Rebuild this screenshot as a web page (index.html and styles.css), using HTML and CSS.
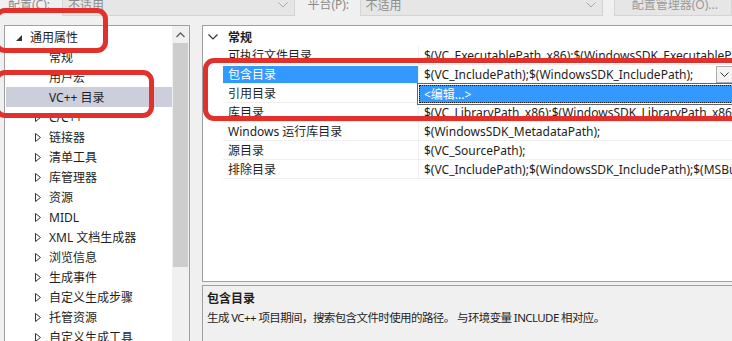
FILE: index.html
```html
<!DOCTYPE html>
<html>
<head>
<meta charset="UTF-8">
<title>属性页</title>
<link rel="stylesheet" href="styles.css">
</head>
<body>
<div class="topbar">
  <span class="lbl lbl-conf">配置(C):</span>
  <div class="combo combo-conf"><span>不适用</span>
    <svg class="chev" width="10" height="6" viewBox="0 0 10 6"><polyline points="0.5,0.5 5,5 9.5,0.5" fill="none" stroke="#a8a8a8" stroke-width="1"/></svg>
  </div>
  <span class="lbl lbl-plat">平台(P):</span>
  <div class="combo combo-plat"><span>不适用</span>
    <svg class="chev" width="10" height="6" viewBox="0 0 10 6"><polyline points="0.5,0.5 5,5 9.5,0.5" fill="none" stroke="#a8a8a8" stroke-width="1"/></svg>
  </div>
  <div class="btn">配置管理器(O)...</div>
</div>

<div class="main">
  <div class="tree">
    <ul class="tree-list">
      <li class="node open"><svg class="tri" width="6" height="6" viewBox="0 0 6 6"><polygon points="6,0 6,6 0,6" fill="#333"/></svg>通用属性</li>
      <li class="leaf">常规</li>
      <li class="leaf">用户宏</li>
      <li class="leaf sel">VC++ 目录</li>
      <li class="node"><svg class="tri-c" width="6" height="9" viewBox="0 0 6 9"><polygon points="0.5,0.5 5.5,4.5 0.5,8.5" fill="none" stroke="#333" stroke-width="1"/></svg>C/C++</li>
      <li class="node"><svg class="tri-c" width="6" height="9" viewBox="0 0 6 9"><polygon points="0.5,0.5 5.5,4.5 0.5,8.5" fill="none" stroke="#333" stroke-width="1"/></svg>链接器</li>
      <li class="node"><svg class="tri-c" width="6" height="9" viewBox="0 0 6 9"><polygon points="0.5,0.5 5.5,4.5 0.5,8.5" fill="none" stroke="#333" stroke-width="1"/></svg>清单工具</li>
      <li class="node"><svg class="tri-c" width="6" height="9" viewBox="0 0 6 9"><polygon points="0.5,0.5 5.5,4.5 0.5,8.5" fill="none" stroke="#333" stroke-width="1"/></svg>库管理器</li>
      <li class="node"><svg class="tri-c" width="6" height="9" viewBox="0 0 6 9"><polygon points="0.5,0.5 5.5,4.5 0.5,8.5" fill="none" stroke="#333" stroke-width="1"/></svg>资源</li>
      <li class="node"><svg class="tri-c" width="6" height="9" viewBox="0 0 6 9"><polygon points="0.5,0.5 5.5,4.5 0.5,8.5" fill="none" stroke="#333" stroke-width="1"/></svg>MIDL</li>
      <li class="node"><svg class="tri-c" width="6" height="9" viewBox="0 0 6 9"><polygon points="0.5,0.5 5.5,4.5 0.5,8.5" fill="none" stroke="#333" stroke-width="1"/></svg>XML 文档生成器</li>
      <li class="node"><svg class="tri-c" width="6" height="9" viewBox="0 0 6 9"><polygon points="0.5,0.5 5.5,4.5 0.5,8.5" fill="none" stroke="#333" stroke-width="1"/></svg>浏览信息</li>
      <li class="node"><svg class="tri-c" width="6" height="9" viewBox="0 0 6 9"><polygon points="0.5,0.5 5.5,4.5 0.5,8.5" fill="none" stroke="#333" stroke-width="1"/></svg>生成事件</li>
      <li class="node"><svg class="tri-c" width="6" height="9" viewBox="0 0 6 9"><polygon points="0.5,0.5 5.5,4.5 0.5,8.5" fill="none" stroke="#333" stroke-width="1"/></svg>自定义生成步骤</li>
      <li class="node"><svg class="tri-c" width="6" height="9" viewBox="0 0 6 9"><polygon points="0.5,0.5 5.5,4.5 0.5,8.5" fill="none" stroke="#333" stroke-width="1"/></svg>托管资源</li>
      <li class="node"><svg class="tri-c" width="6" height="9" viewBox="0 0 6 9"><polygon points="0.5,0.5 5.5,4.5 0.5,8.5" fill="none" stroke="#333" stroke-width="1"/></svg>自定义生成工具</li>
    </ul>
    <div class="vscroll">
      <svg class="sarrow" width="9" height="6" viewBox="0 0 9 6"><polyline points="0.5,5 4.5,1 8.5,5" fill="none" stroke="#606060" stroke-width="1.3"/></svg>
      <div class="thumb"></div>
      <div class="track"></div>
      <svg class="sarrow" width="9" height="6" viewBox="0 0 9 6"><polyline points="0.5,1 4.5,5 8.5,1" fill="none" stroke="#606060" stroke-width="1.3"/></svg>
    </div>
  </div>

  <div class="right">
    <div class="grid">
      <div class="cat">
        <span class="gut"><svg width="10" height="6" viewBox="0 0 10 6"><polyline points="0.5,0.5 5,5 9.5,0.5" fill="none" stroke="#333" stroke-width="1.2"/></svg></span>
        <span class="cat-name">常规</span>
      </div>
      <div class="row"><span class="gut"></span><span class="name">可执行文件目录</span><span class="val">$(VC_ExecutablePath_x86);$(WindowsSDK_ExecutablePath);$(VS_ExecutablePath);$(MSBuild_ExecutablePath)</span></div>
      <div class="row row-sel"><span class="gut"></span><span class="name">包含目录</span><span class="val">$(VC_IncludePath);$(WindowsSDK_IncludePath);
        <span class="dd-btn"><svg width="9" height="5" viewBox="0 0 9 5"><polyline points="0.5,0.5 4.5,4.5 8.5,0.5" fill="none" stroke="#333" stroke-width="1"/></svg></span>
        <span class="dd-list"><span class="dd-item">&lt;编辑...&gt;</span></span>
      </span></div>
      <div class="row"><span class="gut"></span><span class="name">引用目录</span><span class="val">$(VC_ReferencesPath_x86);</span></div>
      <div class="row"><span class="gut"></span><span class="name">库目录</span><span class="val">$(VC_LibraryPath_x86);$(WindowsSDK_LibraryPath_x86);$(NETFXKitsDir)Lib\um\x86</span></div>
      <div class="row"><span class="gut"></span><span class="name">Windows 运行库目录</span><span class="val">$(WindowsSDK_MetadataPath);</span></div>
      <div class="row"><span class="gut"></span><span class="name">源目录</span><span class="val">$(VC_SourcePath);</span></div>
      <div class="row"><span class="gut"></span><span class="name">排除目录</span><span class="val">$(VC_IncludePath);$(WindowsSDK_IncludePath);$(MSBuild_ExecutablePath);$(VC_LibraryPath_x86);</span></div>
    </div>
    <div class="desc">
      <div class="desc-title">包含目录</div>
      <div class="desc-text">生成 VC++ 项目期间，搜索包含文件时使用的路径。 与环境变量 INCLUDE 相对应。</div>
    </div>
  </div>
</div>

<!-- 红色标注框 -->
<div class="mark mark1"></div>
<div class="mark mark2"></div>
<div class="mark mark3"></div>
</body>
</html>
```

FILE: styles.css
```css
body {
  margin: 0;
  width: 732px;
  height: 341px;
  overflow: hidden;
  position: relative;
  background: #f0f0f0;
  font-family: "Noto Sans", "Noto Sans CJK SC", sans-serif;
  font-size: 12px;
  color: #1e1e1e;
}

/* 顶部配置栏 */
.topbar {
  display: flex;
  align-items: center;
  height: 22px;
  margin-top: -6px;
  margin-bottom: 9px;
  color: #8a8a8a;
}
.lbl {
  line-height: 22px;
  white-space: nowrap;
}
.lbl-conf {
  margin-left: 8px;
  width: 55px;
}
.lbl-plat {
  margin-left: 12px;
  width: 53px;
}
.combo {
  display: flex;
  align-items: center;
  justify-content: space-between;
  box-sizing: border-box;
  height: 22px;
  padding: 0 6px 0 5px;
  background: #e6e6e6;
  border: 1px solid #d4d4d4;
  color: #8d8d8d;
}
.combo-conf {
  width: 237px;
}
.combo-plat {
  width: 247px;
}
.btn {
  box-sizing: border-box;
  height: 22px;
  line-height: 20px;
  margin-left: 11px;
  width: 120px;
  padding-left: 17px;
  background: #e6e6e6;
  border: 1px solid #d4d4d4;
  white-space: nowrap;
  color: #9a9a9a;
}

/* 主体 */
.main {
  display: flex;
  align-items: flex-start;
}

/* 左侧树 */
.tree {
  display: flex;
  box-sizing: border-box;
  margin-left: 4px;
  width: 186px;
  height: 330px;
  background: #fff;
  border: 1px solid #a0a0a0;
}
.tree-list {
  list-style: none;
  margin: 0;
  padding: 1px 0 0;
  width: 167px;
}
.tree-list li {
  display: flex;
  align-items: center;
  box-sizing: border-box;
  height: 20px;
  padding-top: 1px;
  line-height: 19px;
  white-space: nowrap;
  color: #1e1e1e;
}
.tree-list .open {
  padding-left: 11px;
}
.tree-list .open .tri {
  margin-right: 8px;
}
.tree-list .leaf {
  padding-left: 44px;
}
.tree-list .sel {
  background: #cccedb;
  margin-left: 1px;
  padding-left: 43px;
}
.tree-list .node .tri-c {
  margin-left: 30px;
  margin-right: 8px;
}
.vscroll {
  display: flex;
  flex-direction: column;
  align-items: center;
  width: 17px;
  background: #f0f0f0;
}
.sarrow {
  margin: 6px 0 5px;
  flex: none;
}
.thumb {
  width: 15px;
  height: 224px;
  background: #cdcdcd;
  flex: none;
}
.track {
  flex: 1;
}

/* 右侧属性表 */
.right {
  margin-left: 12px;
  width: 545px;
  flex: none;
}
.grid {
  box-sizing: border-box;
  height: 257px;
  background: #fff;
  border: 1px solid #a0a0a0;
}
.cat,
.row {
  display: flex;
  height: 19px;
  white-space: nowrap;
}
.cat {
  height: 20px;
}
.gut {
  display: flex;
  align-items: center;
  justify-content: center;
  width: 20px;
  flex: none;
}
.cat .gut {
  padding-top: 1px;
}
.cat-name {
  font-weight: bold;
  padding: 4px 0 0 5px;
  line-height: 16px;
}
.row .name {
  box-sizing: border-box;
  width: 196px;
  height: 19px;
  flex: none;
  padding: 1px 0 0 5px;
  line-height: 18px;
  border-right: 1px solid #f0f0f0;
  border-bottom: 1px solid #f0f0f0;
  overflow: hidden;
}
.row .val {
  position: relative;
  box-sizing: border-box;
  height: 19px;
  flex: 1;
  padding: 1px 0 0 5px;
  line-height: 18px;
  border-bottom: 1px solid #f0f0f0;
}
.row-sel .name {
  background: #3399ff;
  color: #fff;
  border-top: 1px solid #fff;
  padding-top: 0;
}
.dd-btn {
  position: absolute;
  top: 1px;
  left: 297px;
  box-sizing: border-box;
  width: 17px;
  height: 17px;
  display: flex;
  align-items: center;
  justify-content: center;
  background: #f3f3f3;
  border: 1px solid #adadad;
}
.dd-list {
  position: absolute;
  top: 18px;
  left: -2px;
  z-index: 2;
  box-sizing: border-box;
  width: 318px;
  height: 22px;
  padding: 1px;
  background: #fff;
  border: 1px solid #646464;
}
.dd-item {
  display: block;
  box-sizing: border-box;
  height: 18px;
  line-height: 17px;
  padding-left: 4px;
  background: #3399ff;
  color: #fff;
  border: 1px dotted #1a1a1a;
}

/* 描述区 */
.desc {
  box-sizing: border-box;
  margin-top: 3px;
  height: 70px;
  padding: 3px 4px;
  border: 1px solid #a0a0a0;
  background: #f0f0f0;
  line-height: 19px;
}
.desc-title {
  font-weight: bold;
}
.desc-text {
  white-space: nowrap;
  font-size: 11.5px;
  letter-spacing: -0.6px;
}

/* 红色标注 */
.mark {
  position: absolute;
  border: 5px solid #e2312b;
  border-radius: 11px;
  z-index: 5;
}
.mark1 {
  left: -6px;
  top: 8px;
  width: 104px;
  height: 35px;
}
.mark2 {
  left: -6px;
  top: 70px;
  width: 150px;
  height: 38px;
}
.mark3 {
  left: 203px;
  top: 58px;
  width: 560px;
  height: 53px;
}
```
